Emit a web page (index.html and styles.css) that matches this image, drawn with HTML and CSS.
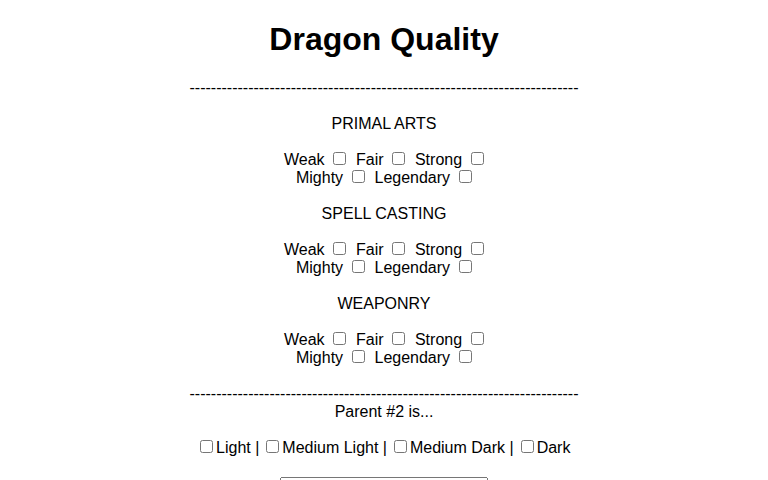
FILE: index.html
```html
<!DOCTYPE html>
<html lang="en">

<head>
    <meta charset="UTF-8">
    <meta name="viewport" content="width=device-width, initial-scale=1.0">
    <title>Dragon Quality</title>
    <link rel="stylesheet" href="styles.css">
</head>

<body>
    <h1>Dragon Quality</h1>
    <p>-------------------------------------------------------------------------</p>

    <p>PRIMAL ARTS</p>
    <p class="valg">
        Weak <input type="checkbox" name="primal" value="weak"> Fair <input type="checkbox" name="primal" value="fair"> Strong <input type="checkbox" name="primal" value="strong"><br>
        Mighty <input type="checkbox" name="primal" value="mighty"> Legendary <input type="checkbox" name="primal" value="legendary">
    </p>

    <p>SPELL CASTING</p>
    <p class="valg">
        Weak <input type="checkbox" name="spell" value="weak"> Fair <input type="checkbox" name="spell" value="fair"> Strong <input type="checkbox" name="spell" value="strong"><br>
        Mighty <input type="checkbox" name="spell" value="mighty"> Legendary <input type="checkbox" name="spell" value="legendary">
    </p>

    <p>WEAPONRY</p>
    <p class="valg">
        Weak <input type="checkbox" name="weapon" value="weak"> Fair <input type="checkbox" name="weapon" value="fair"> Strong <input type="checkbox" name="weapon" value="strong"><br>
        Mighty <input type="checkbox" name="weapon" value="mighty"> Legendary <input type="checkbox" name="weapon" value="legendary">
    </p>

    <p>-------------------------------------------------------------------------<br>
        Parent #2 is...</p>
    <p class="farve">
        <input type="checkbox" name="tone" value="light">Light | <input type="checkbox" name="tone" value="medium-light">Medium Light | <input type="checkbox" name="tone" value="medium-dark">Medium Dark | <input type="checkbox" name="tone" value="dark">Dark
    </p>
    <input type="text" class="navn">
</body></html>
```
FILE: styles.css
```css
body {
    margin: 0;
    padding: 0 8px;
    font-family: "Liberation Sans", Arial, sans-serif;
    text-align: center;
}

h1 {
    margin: 21px 0;
}

p {
    margin: 18px 0;
}

input[type="checkbox"] {
    margin: 0 3px 0 4px;
}

.valg {
    padding-left: 5px;
}

.valg input[type="checkbox"] {
    margin-right: 5.5px;
}

.farve input[type="checkbox"] {
    margin-left: 2.5px;
}

.navn {
    display: block;
    width: 208px;
    height: 22px;
    box-sizing: border-box;
    margin: 20px auto 0;
}
```
